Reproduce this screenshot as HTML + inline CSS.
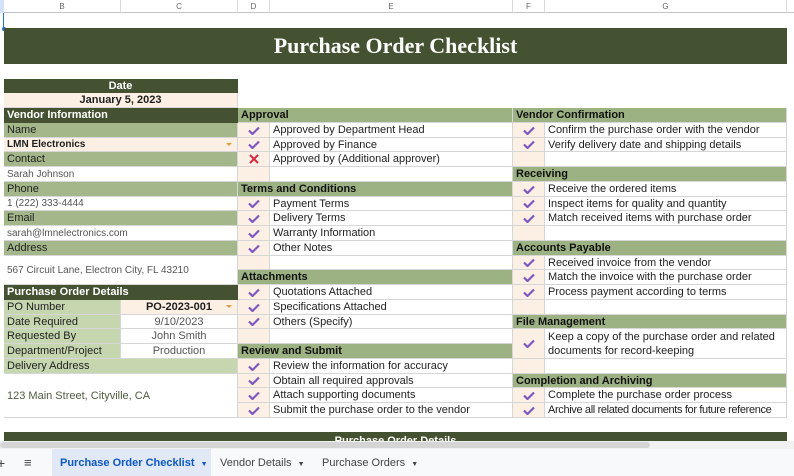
<!DOCTYPE html>
<html><head><meta charset="utf-8">
<style>
*{margin:0;padding:0}
body{width:794px;height:476px;overflow:hidden;background:#fff;position:relative;font-family:"Liberation Sans",Arial,sans-serif}
.c{position:absolute;box-sizing:border-box;border-right:1px solid #d6d6d6;border-bottom:1px solid #d6d6d6;font-size:11px;padding-left:3px;white-space:nowrap;overflow:hidden;color:#1f1f1f;display:flex;align-items:center}
.dk{background:#445231;color:#fff;font-weight:bold;border-color:#445231}
.h{background:#9db283;font-weight:bold;color:#111}
.lb{background:#a3b78a}
.ll{background:#c6d7b0}
.pc{background:#fcefe3;justify-content:center;padding:0}
.w{background:#fff}
.g{color:#555}
.ctr{justify-content:center;padding:0}
.arr{position:absolute;right:5px;top:5px;width:0;height:0;border-left:3px solid transparent;border-right:3px solid transparent;border-top:3px solid #e0a040}
.hd{position:absolute;top:0;height:13px;font-size:8px;color:#666;text-align:center;line-height:13px;border-right:1px solid #dadada;box-sizing:border-box}
</style></head><body>
<div style="position:absolute;left:0;top:0;width:794px;height:13px;border-bottom:1px solid #c4c4c4;box-sizing:border-box"></div>
<div class="hd" style="left:4px;width:117px">B</div>
<div class="hd" style="left:121px;width:117px">C</div>
<div class="hd" style="left:238px;width:32px">D</div>
<div class="hd" style="left:270px;width:243px">E</div>
<div class="hd" style="left:513px;width:32px">F</div>
<div class="hd" style="left:545px;width:242px">G</div>
<div style="position:absolute;left:0;top:0;width:4px;height:13px;background:#d3e3fd"></div>
<div style="position:absolute;left:3px;top:13px;width:1px;height:16px;background:#1a73e8"></div>
<div style="position:absolute;left:2px;top:27px;width:4px;height:4px;border-radius:50%;background:#1a73e8"></div>

<div style="position:absolute;left:4px;top:28px;width:783px;height:36px;background:#445231;color:#fff;font-family:'Liberation Serif',serif;font-weight:bold;font-size:22px;text-align:center;line-height:36px">Purchase Order Checklist</div>

<div class="c dk ctr" style="left:4px;top:79px;width:234px;height:14px">Date</div>
<div class="c pc" style="left:4px;top:93px;width:234px;height:15px;font-weight:bold">January 5, 2023</div>
<div class="c dk" style="left:4px;top:108px;width:234px;height:15px">Vendor Information</div>
<div class="c lb" style="left:4px;top:123px;width:234px;height:15px">Name</div>
<div class="c" style="left:4px;top:138px;width:234px;height:14px;background:#fcefe3;font-weight:bold;font-size:10px">LMN Electronics<span class="arr"></span></div>
<div class="c lb" style="left:4px;top:152px;width:234px;height:15px">Contact</div>
<div class="c w g" style="left:4px;top:167px;width:234px;height:15px;font-size:10px">Sarah Johnson</div>
<div class="c lb" style="left:4px;top:182px;width:234px;height:15px">Phone</div>
<div class="c w g" style="left:4px;top:197px;width:234px;height:14px;font-size:10px">1 (222) 333-4444</div>
<div class="c lb" style="left:4px;top:211px;width:234px;height:15px">Email</div>
<div class="c w g" style="left:4px;top:226px;width:234px;height:15px;font-size:10px">sarah@lmnelectronics.com</div>
<div class="c lb" style="left:4px;top:241px;width:234px;height:15px">Address</div>
<div class="c w g" style="left:4px;top:256px;width:234px;height:29px;font-size:10px">567 Circuit Lane, Electron City, FL 43210</div>
<div class="c dk" style="left:4px;top:285px;width:234px;height:15px">Purchase Order Details</div>
<div class="c ll" style="left:4px;top:300px;width:117px;height:15px">PO Number</div>
<div class="c pc" style="left:121px;top:300px;width:117px;height:15px;font-weight:bold">PO-2023-001<span class="arr"></span></div>
<div class="c ll" style="left:4px;top:315px;width:117px;height:14px">Date Required</div>
<div class="c w g ctr" style="left:121px;top:315px;width:117px;height:14px">9/10/2023</div>
<div class="c ll" style="left:4px;top:329px;width:117px;height:15px">Requested By</div>
<div class="c w g ctr" style="left:121px;top:329px;width:117px;height:15px">John Smith</div>
<div class="c ll" style="left:4px;top:344px;width:117px;height:15px">Department/Project</div>
<div class="c w g ctr" style="left:121px;top:344px;width:117px;height:15px">Production</div>
<div class="c ll" style="left:4px;top:359px;width:234px;height:15px">Delivery Address</div>
<div class="c w" style="left:4px;top:374px;width:234px;height:44px;color:#4e5d40">123 Main Street, Cityville, CA</div>

<div class="c h" style="left:238px;top:108px;width:275px;height:15px">Approval</div>
<div class="c pc" style="left:238px;top:123px;width:32px;height:15px"><svg width="12" height="9"><path d="M1 4.5L4.5 8L11 1.5" stroke="#7e57c2" stroke-width="2.2" fill="none"/></svg></div><div class="c w" style="left:270px;top:123px;width:243px;height:15px">Approved by Department Head</div>
<div class="c pc" style="left:238px;top:138px;width:32px;height:14px"><svg width="12" height="9"><path d="M1 4.5L4.5 8L11 1.5" stroke="#7e57c2" stroke-width="2.2" fill="none"/></svg></div><div class="c w" style="left:270px;top:138px;width:243px;height:14px">Approved by Finance</div>
<div class="c pc" style="left:238px;top:152px;width:32px;height:15px"><svg width="10" height="10"><path d="M1 1L9 9M9 1L1 9" stroke="#e0263f" stroke-width="2" fill="none"/></svg></div><div class="c w" style="left:270px;top:152px;width:243px;height:15px">Approved by (Additional approver)</div>
<div class="c pc" style="left:238px;top:167px;width:32px;height:15px"></div><div class="c w" style="left:270px;top:167px;width:243px;height:15px"></div>
<div class="c h" style="left:238px;top:182px;width:275px;height:15px">Terms and Conditions</div>
<div class="c pc" style="left:238px;top:197px;width:32px;height:14px"><svg width="12" height="9"><path d="M1 4.5L4.5 8L11 1.5" stroke="#7e57c2" stroke-width="2.2" fill="none"/></svg></div><div class="c w" style="left:270px;top:197px;width:243px;height:14px">Payment Terms</div>
<div class="c pc" style="left:238px;top:211px;width:32px;height:15px"><svg width="12" height="9"><path d="M1 4.5L4.5 8L11 1.5" stroke="#7e57c2" stroke-width="2.2" fill="none"/></svg></div><div class="c w" style="left:270px;top:211px;width:243px;height:15px">Delivery Terms</div>
<div class="c pc" style="left:238px;top:226px;width:32px;height:15px"><svg width="12" height="9"><path d="M1 4.5L4.5 8L11 1.5" stroke="#7e57c2" stroke-width="2.2" fill="none"/></svg></div><div class="c w" style="left:270px;top:226px;width:243px;height:15px">Warranty Information</div>
<div class="c pc" style="left:238px;top:241px;width:32px;height:15px"><svg width="12" height="9"><path d="M1 4.5L4.5 8L11 1.5" stroke="#7e57c2" stroke-width="2.2" fill="none"/></svg></div><div class="c w" style="left:270px;top:241px;width:243px;height:15px">Other Notes</div>
<div class="c pc" style="left:238px;top:256px;width:32px;height:14px"></div><div class="c w" style="left:270px;top:256px;width:243px;height:14px"></div>
<div class="c h" style="left:238px;top:270px;width:275px;height:15px">Attachments</div>
<div class="c pc" style="left:238px;top:285px;width:32px;height:15px"><svg width="12" height="9"><path d="M1 4.5L4.5 8L11 1.5" stroke="#7e57c2" stroke-width="2.2" fill="none"/></svg></div><div class="c w" style="left:270px;top:285px;width:243px;height:15px">Quotations Attached</div>
<div class="c pc" style="left:238px;top:300px;width:32px;height:15px"><svg width="12" height="9"><path d="M1 4.5L4.5 8L11 1.5" stroke="#7e57c2" stroke-width="2.2" fill="none"/></svg></div><div class="c w" style="left:270px;top:300px;width:243px;height:15px">Specifications Attached</div>
<div class="c pc" style="left:238px;top:315px;width:32px;height:14px"><svg width="12" height="9"><path d="M1 4.5L4.5 8L11 1.5" stroke="#7e57c2" stroke-width="2.2" fill="none"/></svg></div><div class="c w" style="left:270px;top:315px;width:243px;height:14px">Others (Specify)</div>
<div class="c pc" style="left:238px;top:329px;width:32px;height:15px"></div><div class="c w" style="left:270px;top:329px;width:243px;height:15px"></div>
<div class="c h" style="left:238px;top:344px;width:275px;height:15px">Review and Submit</div>
<div class="c pc" style="left:238px;top:359px;width:32px;height:15px"><svg width="12" height="9"><path d="M1 4.5L4.5 8L11 1.5" stroke="#7e57c2" stroke-width="2.2" fill="none"/></svg></div><div class="c w" style="left:270px;top:359px;width:243px;height:15px">Review the information for accuracy</div>
<div class="c pc" style="left:238px;top:374px;width:32px;height:14px"><svg width="12" height="9"><path d="M1 4.5L4.5 8L11 1.5" stroke="#7e57c2" stroke-width="2.2" fill="none"/></svg></div><div class="c w" style="left:270px;top:374px;width:243px;height:14px">Obtain all required approvals</div>
<div class="c pc" style="left:238px;top:388px;width:32px;height:15px"><svg width="12" height="9"><path d="M1 4.5L4.5 8L11 1.5" stroke="#7e57c2" stroke-width="2.2" fill="none"/></svg></div><div class="c w" style="left:270px;top:388px;width:243px;height:15px">Attach supporting documents</div>
<div class="c pc" style="left:238px;top:403px;width:32px;height:15px"><svg width="12" height="9"><path d="M1 4.5L4.5 8L11 1.5" stroke="#7e57c2" stroke-width="2.2" fill="none"/></svg></div><div class="c w" style="left:270px;top:403px;width:243px;height:15px">Submit the purchase order to the vendor</div>

<div class="c h" style="left:513px;top:108px;width:274px;height:15px">Vendor Confirmation</div>
<div class="c pc" style="left:513px;top:123px;width:32px;height:15px"><svg width="12" height="9"><path d="M1 4.5L4.5 8L11 1.5" stroke="#7e57c2" stroke-width="2.2" fill="none"/></svg></div><div class="c w" style="left:545px;top:123px;width:242px;height:15px">Confirm the purchase order with the vendor</div>
<div class="c pc" style="left:513px;top:138px;width:32px;height:14px"><svg width="12" height="9"><path d="M1 4.5L4.5 8L11 1.5" stroke="#7e57c2" stroke-width="2.2" fill="none"/></svg></div><div class="c w" style="left:545px;top:138px;width:242px;height:14px">Verify delivery date and shipping details</div>
<div class="c pc" style="left:513px;top:152px;width:32px;height:15px"></div><div class="c w" style="left:545px;top:152px;width:242px;height:15px"></div>
<div class="c h" style="left:513px;top:167px;width:274px;height:15px">Receiving</div>
<div class="c pc" style="left:513px;top:182px;width:32px;height:15px"><svg width="12" height="9"><path d="M1 4.5L4.5 8L11 1.5" stroke="#7e57c2" stroke-width="2.2" fill="none"/></svg></div><div class="c w" style="left:545px;top:182px;width:242px;height:15px">Receive the ordered items</div>
<div class="c pc" style="left:513px;top:197px;width:32px;height:14px"><svg width="12" height="9"><path d="M1 4.5L4.5 8L11 1.5" stroke="#7e57c2" stroke-width="2.2" fill="none"/></svg></div><div class="c w" style="left:545px;top:197px;width:242px;height:14px">Inspect items for quality and quantity</div>
<div class="c pc" style="left:513px;top:211px;width:32px;height:15px"><svg width="12" height="9"><path d="M1 4.5L4.5 8L11 1.5" stroke="#7e57c2" stroke-width="2.2" fill="none"/></svg></div><div class="c w" style="left:545px;top:211px;width:242px;height:15px">Match received items with purchase order</div>
<div class="c pc" style="left:513px;top:226px;width:32px;height:15px"></div><div class="c w" style="left:545px;top:226px;width:242px;height:15px"></div>
<div class="c h" style="left:513px;top:241px;width:274px;height:15px">Accounts Payable</div>
<div class="c pc" style="left:513px;top:256px;width:32px;height:14px"><svg width="12" height="9"><path d="M1 4.5L4.5 8L11 1.5" stroke="#7e57c2" stroke-width="2.2" fill="none"/></svg></div><div class="c w" style="left:545px;top:256px;width:242px;height:14px">Received invoice from the vendor</div>
<div class="c pc" style="left:513px;top:270px;width:32px;height:15px"><svg width="12" height="9"><path d="M1 4.5L4.5 8L11 1.5" stroke="#7e57c2" stroke-width="2.2" fill="none"/></svg></div><div class="c w" style="left:545px;top:270px;width:242px;height:15px">Match the invoice with the purchase order</div>
<div class="c pc" style="left:513px;top:285px;width:32px;height:15px"><svg width="12" height="9"><path d="M1 4.5L4.5 8L11 1.5" stroke="#7e57c2" stroke-width="2.2" fill="none"/></svg></div><div class="c w" style="left:545px;top:285px;width:242px;height:15px">Process payment according to terms</div>
<div class="c pc" style="left:513px;top:300px;width:32px;height:15px"></div><div class="c w" style="left:545px;top:300px;width:242px;height:15px"></div>
<div class="c h" style="left:513px;top:315px;width:274px;height:14px">File Management</div>
<div class="c pc" style="left:513px;top:329px;width:32px;height:30px"><svg width="12" height="9"><path d="M1 4.5L4.5 8L11 1.5" stroke="#7e57c2" stroke-width="2.2" fill="none"/></svg></div><div class="c w" style="left:545px;top:329px;width:242px;height:30px;line-height:14px;white-space:normal">Keep a copy of the purchase order and related documents for record-keeping</div>
<div class="c pc" style="left:513px;top:359px;width:32px;height:15px"></div><div class="c w" style="left:545px;top:359px;width:242px;height:15px"></div>
<div class="c h" style="left:513px;top:374px;width:274px;height:14px">Completion and Archiving</div>
<div class="c pc" style="left:513px;top:388px;width:32px;height:15px"><svg width="12" height="9"><path d="M1 4.5L4.5 8L11 1.5" stroke="#7e57c2" stroke-width="2.2" fill="none"/></svg></div><div class="c w" style="left:545px;top:388px;width:242px;height:15px">Complete the purchase order process</div>
<div class="c pc" style="left:513px;top:403px;width:32px;height:15px"><svg width="12" height="9"><path d="M1 4.5L4.5 8L11 1.5" stroke="#7e57c2" stroke-width="2.2" fill="none"/></svg></div><div class="c w" style="left:545px;top:403px;width:242px;height:15px;letter-spacing:-0.35px">Archive all related documents for future reference</div>

<div style="position:absolute;left:4px;top:432px;width:783px;height:10px;background:#445231;color:#fff;font-weight:bold;font-size:11px;text-align:center;line-height:18px;overflow:hidden">Purchase Order Details</div>
<div style="position:absolute;left:0;top:441px;width:794px;height:8px;background:#f1f1f1"></div>
<div style="position:absolute;left:0;top:442px;width:650px;height:6px;background:#d5d5d5;border-radius:3px"></div>
<div style="position:absolute;left:0;top:449px;width:794px;height:27px;background:#f8f9fa"></div>
<div style="position:absolute;left:-3px;top:455px;font-size:14px;color:#444">+</div>
<div style="position:absolute;left:24px;top:455px;font-size:13px;color:#444">&#8801;</div>
<div style="position:absolute;left:52px;top:449px;width:159px;height:27px;background:#e1e9f7"></div>
<div style="position:absolute;left:60px;top:457px;font-size:11px;color:#0b57d0;font-weight:bold">Purchase Order Checklist &nbsp;<span style="font-size:7px">▼</span></div>
<div style="position:absolute;left:220px;top:457px;font-size:11px;color:#444">Vendor Details &nbsp;<span style="font-size:7px">▼</span></div>
<div style="position:absolute;left:322px;top:457px;font-size:11px;color:#444">Purchase Orders &nbsp;<span style="font-size:7px">▼</span></div>
</body></html>
